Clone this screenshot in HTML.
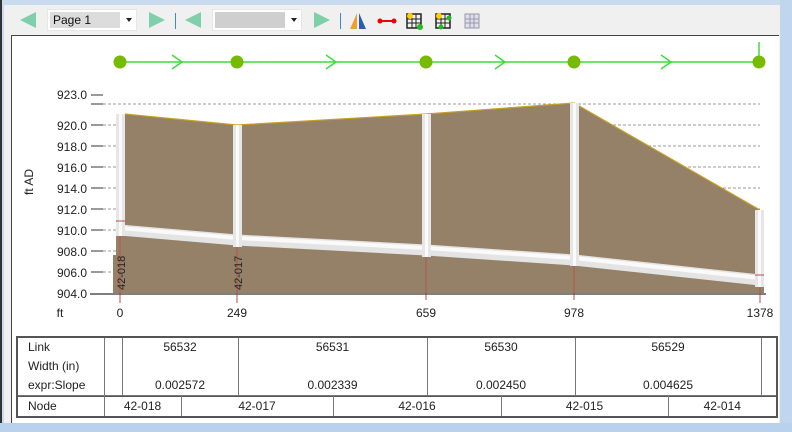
<!DOCTYPE html>
<html><head><style>
*{margin:0;padding:0;box-sizing:border-box}
body{width:792px;height:432px;overflow:hidden;background:#f0f0f0;font-family:"Liberation Sans",sans-serif;position:relative}
.a{position:absolute}
.sel{position:absolute;background:#fff;border:1px solid #e6e6e6;height:22px}
td{border:1px solid #777;font-size:12px;color:#222;padding:0}
</style></head><body>
<div class="a" style="left:0;top:0;width:792px;height:5px;background:#c9dcef"></div>
<div class="a" style="left:0;top:0;width:2px;height:432px;background:#333"></div>
<div class="a" style="left:2px;top:0;width:2px;height:432px;background:#c9dcef"></div>
<div class="a" style="left:780px;top:0;width:12px;height:432px;background:#c0d6ee"></div>
<div class="a" style="left:0;top:423px;width:792px;height:9px;background:#b9d1ec"></div>
<!-- toolbar -->
<svg class="a" style="left:0;top:5px" width="520" height="30">
<polygon points="20,15 36,7 36,23" fill="#7fcfaa"/>
<polygon points="149,7 149,23 165,15" fill="#7fcfaa"/>
<rect x="175" y="8" width="1" height="16" fill="#3a8ad0"/>
<polygon points="185,15 201,7 201,23" fill="#7fcfaa"/>
<polygon points="314,7 314,23 330,15" fill="#7fcfaa"/>
<rect x="340" y="8" width="1" height="16" fill="#3a8ad0"/>
<polygon points="350,24 357,8 357,24" fill="#f0a030"/>
<polygon points="359,8 359,24 366,24" fill="#2a5db0"/>
<line x1="380" y1="16" x2="394" y2="16" stroke="#e00" stroke-width="2"/>
<circle cx="380" cy="16" r="2.5" fill="#e00"/><circle cx="394" cy="16" r="2.5" fill="#e00"/>
<rect x="407" y="9" width="14" height="14" fill="none" stroke="#222" stroke-width="1.5"/>
<path d="M407 14h14M407 18h14M412 9v14M416 9v14" stroke="#222"/>
<circle cx="410" cy="11" r="3" fill="#ffd000"/><circle cx="420" cy="22" r="3" fill="#2b2"/>
<rect x="436" y="9" width="14" height="14" fill="none" stroke="#222" stroke-width="1.5"/>
<path d="M436 14h14M436 18h14M441 9v14M445 9v14" stroke="#222"/>
<circle cx="439" cy="11" r="3" fill="#ffd000"/><circle cx="449" cy="13" r="2.5" fill="#2b2"/><circle cx="441" cy="22" r="2.5" fill="#2b2"/>
<rect x="465" y="9" width="14" height="14" fill="#dde" stroke="#99a" stroke-width="1"/>
<path d="M465 14h14M465 18h14M470 9v14M474 9v14" stroke="#99a"/>
</svg>
<div class="sel" style="left:47px;top:9px;width:90px"><div class="a" style="left:2px;top:2px;width:70px;height:16px;background:#dcdcdc;font-size:12px;line-height:16px;padding-left:3px;color:#111">Page 1</div><div class="a" style="left:78px;top:8px;border:3px solid transparent;border-top:4px solid #222"></div></div>
<div class="sel" style="left:212px;top:9px;width:90px"><div class="a" style="left:2px;top:2px;width:70px;height:16px;background:#cfcfcf"></div><div class="a" style="left:78px;top:8px;border:3px solid transparent;border-top:4px solid #222"></div></div>
<!-- panel -->
<div class="a" style="left:11px;top:35px;width:768px;height:388px;background:#fff;border-top:1px solid #444;border-left:1px solid #444"></div>
<svg class="a" style="left:0;top:0" width="792" height="432">
<g stroke="#999" stroke-dasharray="3,2" stroke-width="1">
<line x1="103" y1="104" x2="760" y2="104"/><line x1="103" y1="125" x2="760" y2="125"/><line x1="103" y1="146" x2="760" y2="146"/><line x1="103" y1="167" x2="760" y2="167"/><line x1="103" y1="188" x2="760" y2="188"/><line x1="103" y1="209" x2="760" y2="209"/><line x1="103" y1="230" x2="760" y2="230"/><line x1="103" y1="251" x2="760" y2="251"/><line x1="103" y1="272" x2="760" y2="272"/>
</g>
<g stroke="#333"><line x1="91" y1="95" x2="103" y2="95"/><line x1="91" y1="104" x2="103" y2="104"/><line x1="91" y1="125" x2="103" y2="125"/><line x1="91" y1="146" x2="103" y2="146"/><line x1="91" y1="167" x2="103" y2="167"/><line x1="91" y1="188" x2="103" y2="188"/><line x1="91" y1="209" x2="103" y2="209"/><line x1="91" y1="230" x2="103" y2="230"/><line x1="91" y1="251" x2="103" y2="251"/><line x1="91" y1="272" x2="103" y2="272"/></g>
<polygon points="113,255 116,255 116,114 125,114 237,125 426,114 574,103 760,210 764,210 764,293 113,293" fill="#927d62" fill-opacity="0.97"/>
<polyline points="125,114 237,125 426,114 574,103 760,210" fill="none" stroke="#c8a020" stroke-width="1.2"/>
<polyline points="120,230 237,240 426,250 574,260 760,280" fill="none" stroke="#e4e4e4" stroke-width="11"/>
<polyline points="120,228 237,238 426,248 574,258 760,278" fill="none" stroke="#fafafa" stroke-width="4"/>
<g fill="#e6e6e6"><rect x="116" y="114" width="9" height="122"/><rect x="233" y="125" width="9" height="122"/><rect x="422" y="114" width="9" height="143"/><rect x="570" y="103" width="9" height="163"/><rect x="755" y="210" width="9" height="77"/></g>
<g fill="#fafafa"><rect x="119" y="114" width="3" height="122"/><rect x="236" y="125" width="3" height="122"/><rect x="425" y="114" width="3" height="143"/><rect x="573" y="103" width="3" height="163"/><rect x="758" y="210" width="3" height="77"/></g>
<g stroke="#b5524a"><line x1="120" y1="236" x2="120" y2="303"/><line x1="237" y1="247" x2="237" y2="303"/><line x1="426" y1="257" x2="426" y2="300"/><line x1="574" y1="266" x2="574" y2="300"/><line x1="760" y1="287" x2="760" y2="303"/><line x1="116" y1="221" x2="125" y2="221"/><line x1="755" y1="275" x2="764" y2="275"/></g>
<line x1="90" y1="294" x2="766" y2="294" stroke="#555" stroke-width="1.5"/>
<g font-size="12" fill="#222" text-anchor="end"><text x="87" y="99">923.0</text><text x="87" y="130">920.0</text><text x="87" y="151">918.0</text><text x="87" y="172">916.0</text><text x="87" y="193">914.0</text><text x="87" y="214">912.0</text><text x="87" y="235">910.0</text><text x="87" y="256">908.0</text><text x="87" y="277">906.0</text><text x="87" y="298">904.0</text></g>
<text x="33" y="182" font-size="12" fill="#222" transform="rotate(-90 33 182)" text-anchor="middle">ft AD</text>
<g font-size="12" fill="#222" text-anchor="middle"><text x="60" y="317">ft</text><text x="120" y="317">0</text><text x="237" y="317">249</text><text x="426" y="317">659</text><text x="574" y="317">978</text><text x="760" y="317">1378</text></g>
<text font-size="11" fill="#222" transform="translate(125 290) rotate(-90)">42-018</text>
<text font-size="11" fill="#222" transform="translate(242 290) rotate(-90)">42-017</text>
<line x1="120" y1="62" x2="760" y2="62" stroke="#3ddc3d" stroke-width="1.5"/>
<line x1="759" y1="42" x2="759" y2="62" stroke="#3ddc3d" stroke-width="1.5"/>
<g stroke="#3ddc3d" stroke-width="1.5" fill="none"><polyline points="172,55 182,62 172,69"/><polyline points="326,55 336,62 326,69"/><polyline points="495,55 505,62 495,69"/><polyline points="661,55 671,62 661,69"/></g>
<g fill="#77bb00"><circle cx="120" cy="62" r="6.5"/><circle cx="237" cy="62" r="6.5"/><circle cx="426" cy="62" r="6.5"/><circle cx="574" cy="62" r="6.5"/><circle cx="759" cy="62" r="6.5"/></g>
</svg>
<!-- table -->
<table class="a" style="left:16px;top:336px;width:762px;height:60px;border-collapse:collapse;border:2px solid #555">
<tr><td style="width:87px;padding-left:10px;line-height:19px;vertical-align:top">Link<br>Width (in)<br>expr:Slope</td><td style="width:18px"></td>
<td style="width:116px;text-align:center;line-height:19px">56532<br>&nbsp;<br>0.002572</td>
<td style="width:189px;text-align:center;line-height:19px">56531<br>&nbsp;<br>0.002339</td>
<td style="width:148px;text-align:center;line-height:19px">56530<br>&nbsp;<br>0.002450</td>
<td style="width:186px;text-align:center;line-height:19px">56529<br>&nbsp;<br>0.004625</td><td></td></tr></table>
<table class="a" style="left:16px;top:395px;width:762px;height:23px;border-collapse:collapse;border:2px solid #555;border-top:none">
<tr><td style="width:87px;padding-left:10px">Node</td><td style="width:77px;text-align:center">42-018</td><td style="width:152px;text-align:center">42-017</td><td style="width:168px;text-align:center">42-016</td><td style="width:167px;text-align:center">42-015</td><td style="text-align:center">42-014</td></tr></table>
</body></html>
